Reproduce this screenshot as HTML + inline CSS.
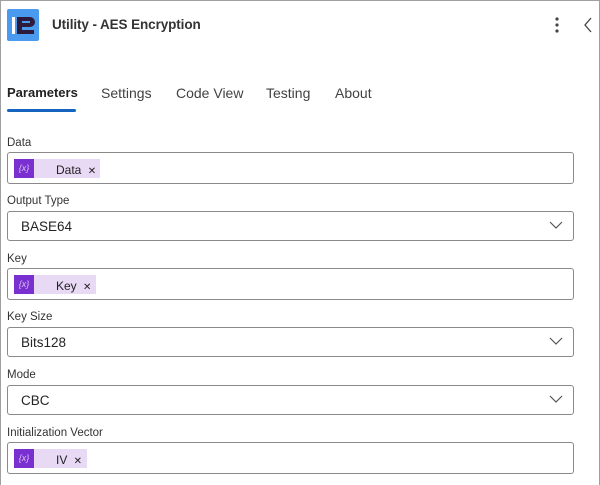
<!DOCTYPE html>
<html><head><style>
*{box-sizing:border-box;margin:0;padding:0}
body{width:600px;height:485px;background:#fff;font-family:"Liberation Sans",sans-serif;color:#242424;position:relative;overflow:hidden}
.frame{position:absolute;left:0;top:0;width:600px;height:485px;border:1px solid #a0a0a0;border-bottom:none}
.logo{position:absolute;left:7px;top:9px;width:32px;height:32px;background:#4a9bf0;border-radius:2px}
.title{position:absolute;left:52px;top:17px;font-size:13.5px;font-weight:bold;color:#333;letter-spacing:-0.1px}
.tabs{position:absolute;top:85px;left:7px;font-size:14px;color:#424242}
.tab{position:absolute;white-space:nowrap}
.ul{position:absolute;left:7px;top:109px;width:69px;height:3px;background:#1565c0;border-radius:2px}
.lbl{position:absolute;left:7px;font-size:11.5px;color:#333}
.fld{position:absolute;left:7px;width:567px;border:1px solid #8a8a8a;border-radius:3px;background:#fff}
.sel{height:30px;font-size:13.5px;padding:7px 0 0 13px}
.tok{height:32px}
.chip{position:absolute;left:6px;top:6px;height:19px;background:#e8d9f5;font-size:12px;color:#222}
.chip .ic{position:absolute;left:0;top:0;width:20px;height:19px;background:#7a2fd0;color:#d9c4f2;font-size:9px;text-align:center;line-height:18px;font-style:italic}
.chip .t{position:absolute;top:4px;white-space:nowrap}
.chev{position:absolute;right:10px;top:8px}
</style></head><body>
<div class="frame"></div>
<div class="logo"><svg width="32" height="32"><rect x="5" y="8" width="3" height="17" fill="#fff"/><path d="M10 8h13a5 5 0 0 1 0 10h-8v3h12v4h-17z" fill="#2e1a3b"/><rect x="15" y="12" width="8" height="2" fill="#4a9bf0"/></svg></div>
<div class="title">Utility - AES Encryption</div>
<svg style="position:absolute;left:553px;top:17px" width="8" height="16"><circle cx="4" cy="2" r="1.6" fill="#444"/><circle cx="4" cy="8" r="1.6" fill="#444"/><circle cx="4" cy="14" r="1.6" fill="#444"/></svg>
<svg style="position:absolute;left:583px;top:17px" width="10" height="16"><path d="M8 1L2 8l6 7" stroke="#444" stroke-width="1.3" fill="none"/></svg>
<div class="tabs">
<span class="tab" style="left:0;color:#222;font-weight:bold;font-size:13px">Parameters</span>
<span class="tab" style="left:94px">Settings</span>
<span class="tab" style="left:169px">Code View</span>
<span class="tab" style="left:259px">Testing</span>
<span class="tab" style="left:328px">About</span>
</div>
<div class="ul"></div>

<div class="lbl" style="top:137px">Data</div>
<div class="fld tok" style="top:152px"><div class="chip" style="width:86px"><div class="ic">{x}</div><span class="t" style="left:42px">Data <span style="font-size:10px;margin-left:3px">✕</span></span></div></div>

<div class="lbl" style="top:195px">Output Type</div>
<div class="fld sel" style="top:211px">BASE64<svg class="chev" width="14" height="10"><path d="M1 2l6 6 6-6" stroke="#555" stroke-width="1.2" fill="none"/></svg></div>

<div class="lbl" style="top:253px">Key</div>
<div class="fld tok" style="top:268px"><div class="chip" style="width:82px"><div class="ic">{x}</div><span class="t" style="left:42px">Key <span style="font-size:10px;margin-left:3px">✕</span></span></div></div>

<div class="lbl" style="top:311px">Key Size</div>
<div class="fld sel" style="top:327px">Bits128<svg class="chev" width="14" height="10"><path d="M1 2l6 6 6-6" stroke="#555" stroke-width="1.2" fill="none"/></svg></div>

<div class="lbl" style="top:369px">Mode</div>
<div class="fld sel" style="top:385px">CBC<svg class="chev" width="14" height="10"><path d="M1 2l6 6 6-6" stroke="#555" stroke-width="1.2" fill="none"/></svg></div>

<div class="lbl" style="top:427px">Initialization Vector</div>
<div class="fld tok" style="top:442px"><div class="chip" style="width:73px"><div class="ic">{x}</div><span class="t" style="left:42px">IV <span style="font-size:10px;margin-left:3px">✕</span></span></div></div>
</body></html>
